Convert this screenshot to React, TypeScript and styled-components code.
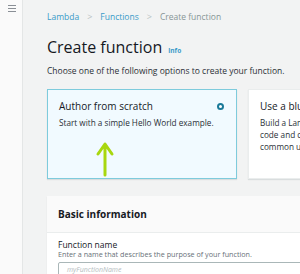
import React from "react";
import styled, { createGlobalStyle } from "styled-components";

const Global = createGlobalStyle`
  html, body { margin: 0; padding: 0; width: 300px; height: 274px; overflow: hidden; }
  body { font-family: "Open Sans", "Noto Sans", Arial, sans-serif; background: #f2f3f3; color: #16191f; }
`;

const Page = styled.div`
  display: flex;
  width: 300px;
  height: 274px;
  overflow: hidden;
`;

const Sidebar = styled.div`
  flex: 0 0 23px;
  background: #fafafa;
  border-right: 1px solid #e4e6e6;
  box-sizing: border-box;
  padding: 5px 0 0 8px;
`;

const Burger = styled.div`
  width: 8px;
  display: flex;
  flex-direction: column;
  gap: 2px;
  span { display: block; height: 1px; background: #8a8f96; }
`;

const Main = styled.div`
  flex: 0 0 auto;
  padding: 11px 0 0 24px;
  width: 420px;
  box-sizing: border-box;
`;

const Crumbs = styled.div`
  display: flex;
  align-items: center;
  gap: 8px;
  font-size: 8.5px;
  line-height: 12px;
  color: #879596;
`;

const CrumbLink = styled.span`
  color: #3a9bc9;
`;

const Sep = styled.span`
  color: #b8c2c3;
  font-size: 9px;
`;

const TitleRow = styled.div`
  display: flex;
  align-items: baseline;
  gap: 6px;
  margin-top: 14px;
`;

const Title = styled.h1`
  margin: 0;
  font-size: 16px;
  font-weight: 400;
  line-height: 20px;
  color: #16191f;
`;

const Info = styled.span`
  font-size: 6.5px;
  font-weight: 700;
  color: #3a9bc9;
`;

const Sub = styled.p`
  margin: 8px 0 0;
  font-size: 8.5px;
  line-height: 12px;
  color: #2a2f36;
`;

const Cards = styled.div`
  display: flex;
  gap: 11px;
  margin-top: 12px;
`;

const Card = styled.div<{ $selected?: boolean }>`
  position: relative;
  flex: 0 0 190px;
  height: 90px;
  box-sizing: border-box;
  padding: 9px 0 0 11px;
  background: ${(p) => (p.$selected ? "#f1faff" : "#ffffff")};
  border: 1px solid ${(p) => (p.$selected ? "#7ecbdc" : "#eaeded")};
  box-shadow: 0 1px 1px rgba(0, 28, 36, 0.1);
`;

const CardTitle = styled.div`
  font-size: 10px;
  line-height: 14px;
  color: #16191f;
`;

const CardText = styled.div`
  margin-top: 4px;
  font-size: 8.2px;
  line-height: 12px;
  color: #2a2f36;
  white-space: nowrap;
`;

const Radio = styled.span`
  position: absolute;
  top: 13px;
  right: 12px;
  width: 3px;
  height: 3px;
  border-radius: 50%;
  border: 2.5px solid #1a7a99;
  background: #fff;
`;

const Arrow = styled.svg`
  position: absolute;
  left: 47px;
  top: 51px;
`;

const Panel = styled.div`
  margin-top: 17px;
  background: #fff;
  box-shadow: 0 1px 1px rgba(0, 28, 36, 0.1);
  height: 100px;
`;

const PanelHead = styled.div`
  background: #fafafa;
  border-bottom: 1px solid #eaeded;
  padding: 11px 0 0 11px;
  height: 37px;
  box-sizing: border-box;
  font-size: 10px;
  font-weight: 700;
  color: #16191f;
`;

const Field = styled.div`
  padding: 6px 0 0 11px;
`;

const Label = styled.div`
  font-size: 8.5px;
  line-height: 11px;
  color: #16191f;
`;

const Hint = styled.div`
  font-size: 7.2px;
  line-height: 9px;
  color: #687078;
`;

const Input = styled.div`
  margin-top: 3px;
  width: 260px;
  height: 16px;
  border: 1px solid #aab7b8;
  border-radius: 2px;
  box-sizing: border-box;
  padding: 2px 0 0 8px;
  font-size: 7px;
  font-style: italic;
  color: #b4bcc0;
`;

export default function App() {
  return (
    <>
      <Global />
      <Page>
        <Sidebar>
          <Burger>
            <span />
            <span />
            <span />
          </Burger>
        </Sidebar>
        <Main>
          <Crumbs>
            <CrumbLink>Lambda</CrumbLink>
            <Sep>&gt;</Sep>
            <CrumbLink>Functions</CrumbLink>
            <Sep>&gt;</Sep>
            <span>Create function</span>
          </Crumbs>
          <TitleRow>
            <Title>Create function</Title>
            <Info>Info</Info>
          </TitleRow>
          <Sub>Choose one of the following options to create your function.</Sub>
          <Cards>
            <Card $selected>
              <CardTitle>Author from scratch</CardTitle>
              <CardText>Start with a simple Hello World example.</CardText>
              <Radio />
              <Arrow width="20" height="36" viewBox="0 0 20 36">
                <path d="M10 34 V4 M3 13 L10 3 L17 13" fill="none" stroke="#a8d70f" strokeWidth="3" strokeLinecap="round" strokeLinejoin="round" />
              </Arrow>
            </Card>
            <Card>
              <CardTitle>Use a blueprint</CardTitle>
              <CardText>
                Build a Lambda application from sample
                <br />
                code and configuration presets for
                <br />
                common use cases.
              </CardText>
            </Card>
          </Cards>
          <Panel>
            <PanelHead>Basic information</PanelHead>
            <Field>
              <Label>Function name</Label>
              <Hint>Enter a name that describes the purpose of your function.</Hint>
              <Input>myFunctionName</Input>
            </Field>
          </Panel>
        </Main>
      </Page>
    </>
  );
}
